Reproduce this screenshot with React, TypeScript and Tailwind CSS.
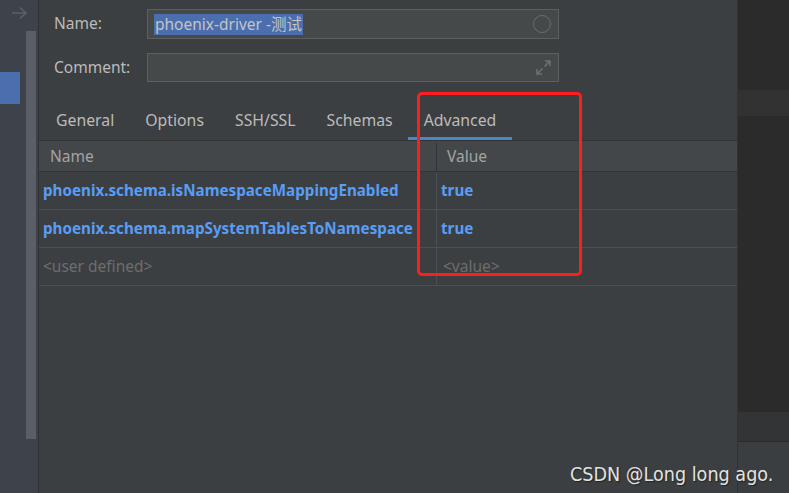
import React from "react";

const font = { fontFamily: '"Noto Sans", "Open Sans", "Noto Sans CJK SC", sans-serif' };

const tabs = ["General", "Options", "SSH/SSL", "Schemas", "Advanced"];

const rows = [
  { name: "phoenix.schema.isNamespaceMappingEnabled", value: "true" },
  { name: "phoenix.schema.mapSystemTablesToNamespace", value: "true" },
];

function Sidebar() {
  return (
    <div className="relative w-[39px] shrink-0 h-full bg-[#3e424b] border-r border-[#2f3134]">
      <svg className="absolute left-[11px] top-[6px]" width="17" height="14" viewBox="0 0 17 14">
        <path d="M1 7h14M9 1.5 15 7l-6 5.5" fill="none" stroke="#5d6063" strokeWidth="1.6" />
      </svg>
      <div className="absolute left-0 top-[72px] w-[20px] h-[32px] bg-[#4b6eaf]" />
      <div className="absolute left-[26px] top-[31px] w-[10px] h-[408px] bg-[#5a5e66]" />
    </div>
  );
}

function Field({ label, children, h }: { label: string; children: React.ReactNode; h: string }) {
  return (
    <div className="flex items-center">
      <div className="w-[108px] pl-[15px] text-[15.5px] text-[#bbbbbb]">{label}</div>
      <div className={`relative w-[412px] ${h} bg-[#45494a] border border-[#5e6060] flex items-center`}>
        {children}
      </div>
    </div>
  );
}

function Main() {
  return (
    <div className="relative w-[699px] shrink-0 h-full bg-[#3c3f41] border-r border-[#323232]">
      <div className="flex flex-col gap-[14px] pt-[9px]">
        <Field label="Name:" h="h-[30px]">
          <span className="ml-[6px] px-[1px] bg-[#4b6eaf] text-[15.5px] leading-[21px] text-[#c4c4c4]">
            phoenix-driver -测试
          </span>
          <div className="absolute right-[7px] top-[5px] w-[18px] h-[18px] rounded-full border border-[#6a6c6e]" />
        </Field>
        <Field label="Comment:" h="h-[29px]">
          <svg className="absolute right-[6px] top-[5px]" width="17" height="17" viewBox="0 0 17 17">
            <path d="M10 2h5v5M15 2 9.5 7.5M7 15H2v-5M2 15l5.5-5.5" fill="none" stroke="#6d7072" strokeWidth="1.6" />
          </svg>
        </Field>
      </div>

      <div className="flex mt-[19px] h-[40px] pl-[1.5px] border-b border-[#323435]">
        {tabs.map((t) => (
          <div
            key={t}
            className={`relative px-[15.5px] flex items-center text-[15.8px] text-[#bbbbbb] ${t === "Advanced" ? "border-b-[3px] border-[#4a88c7] pt-[3px]" : ""}`}
          >
            {t}
          </div>
        ))}
      </div>

      <div className="text-[15.5px]">
        <div className="flex h-[31px] pt-[2px] bg-[#43474a] border-b border-[#323435] text-[#a4a4a4]">
          <div className="w-[398px] pl-[11px] flex items-center border-r border-[#323435]">Name</div>
          <div className="flex-1 pl-[10px] flex items-center">Value</div>
        </div>
        {rows.map((r) => (
          <div key={r.name} className="flex h-[38px] border-b border-[#4d5052]">
            <div className="w-[398px] pl-[4px] flex items-center font-bold text-[15.2px] text-[#589df6] whitespace-nowrap overflow-hidden border-r border-[#4d5052]">
              {r.name}
            </div>
            <div className="flex-1 pl-[4px] flex items-center font-bold text-[15.2px] text-[#589df6]">{r.value}</div>
          </div>
        ))}
        <div className="flex h-[38px] border-b border-[#4d5052] text-[#6d6d6d]">
          <div className="w-[398px] pl-[4px] flex items-center border-r border-[#4d5052]">&lt;user defined&gt;</div>
          <div className="flex-1 pl-[6px] flex items-center">&lt;value&gt;</div>
        </div>
      </div>
    </div>
  );
}

function RightEdge() {
  return (
    <div className="flex-1 h-full flex flex-col">
      <div className="h-[90px] bg-[#2b2b2b]" />
      <div className="h-[26px] bg-[#323232]" />
      <div className="h-[296px] bg-[#2b2b2b]" />
      <div className="h-[30px] bg-[#323436] border-b border-[#2b2b2b]" />
      <div className="flex-1 bg-[#3b3e40]" />
    </div>
  );
}

export default function App() {
  return (
    <div className="relative w-[789px] h-[493px] overflow-hidden flex bg-[#3c3f41]" style={font}>
      <Sidebar />
      <Main />
      <RightEdge />

      <div className="absolute left-[417px] top-[92px] w-[165px] h-[184px] border-[3px] border-[#ff1e1e] rounded-[5px]" />

      <div
        className="absolute left-[570px] top-[460px] text-[19.6px] text-[#e2e2e2] [text-shadow:1px_1px_1px_#222]"
        style={{ fontFamily: '"DejaVu Sans Condensed", "Liberation Sans", sans-serif' }}
      >
        CSDN @Long long ago.
      </div>
    </div>
  );
}
